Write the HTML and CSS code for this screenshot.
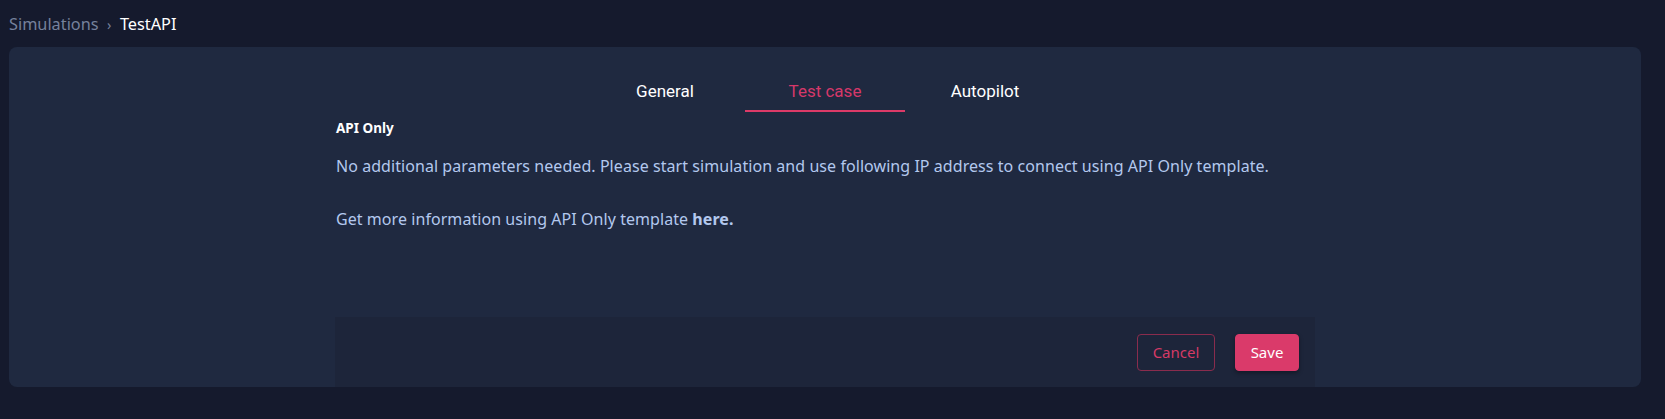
FILE: index.html
```html
<!DOCTYPE html>
<html>
<head>
<meta charset="utf-8">
<link rel="stylesheet" href="styles.css">
</head>
<body>
<nav class="crumbs">
  <span class="crumb-link">Simulations</span>
  <span class="crumb-sep">›</span>
  <span class="crumb-current">TestAPI</span>
</nav>
<main class="panel">
  <div class="tabs">
    <div class="tab">General</div>
    <div class="tab active">Test case</div>
    <div class="tab">Autopilot</div>
  </div>
  <section class="content">
    <h3 class="title">API Only</h3>
    <p class="text">No additional parameters needed. Please start simulation and use following IP address to connect using API Only template.</p>
    <p class="text more">Get more information using API Only template <strong>here.</strong></p>
    <div class="spacer"></div>
    <div class="footer">
      <button class="btn btn-outline">Cancel</button>
      <button class="btn btn-primary">Save</button>
    </div>
  </section>
</main>
</body>
</html>
```

FILE: styles.css
```css
html, body {
  margin: 0;
  padding: 0;
  background: #151a2d;
}
body {
  font-family: "Noto Sans", "Open Sans", sans-serif;
  width: 1665px;
  height: 419px;
  overflow: hidden;
}
.crumbs {
  display: flex;
  align-items: baseline;
  gap: 8.5px;
  padding: 12px 0 0 9px;
  height: 47px;
  box-sizing: border-box;
  font-size: 16.3px;
  line-height: 24px;
}
.crumb-link { color: #75819c; }
.crumb-sep { color: #75819c; font-size: 14px; }
.crumb-current { color: #ffffff; }

.panel {
  margin: 0 24px 0 9px;
  height: 340px;
  background: #1f2940;
  border-radius: 8px;
  display: flex;
  flex-direction: column;
  box-sizing: border-box;
  padding-top: 22px;
}
.tabs {
  display: flex;
  justify-content: center;
}
.tab {
  width: 160px;
  height: 43px;
  box-sizing: border-box;
  padding-top: 4px;
  text-align: center;
  font-family: Roboto, "Noto Sans", sans-serif;
  font-size: 17px;
  line-height: 37px;
  color: #ffffff;
  border-bottom: 2px solid transparent;
}
.tab.active {
  color: #d6386a;
  border-bottom-color: #dc3a68;
}
.content {
  margin-left: 326px;
  width: 980px;
  flex: 1;
  display: flex;
  flex-direction: column;
}
.title {
  margin: 6px 0 0 0;
  padding-left: 1px;
  font-size: 13.5px;
  line-height: 20px;
  font-weight: 700;
  color: #ffffff;
}
.text {
  margin: 16px 0 0 0;
  padding-left: 1px;
  font-size: 16px;
  letter-spacing: 0.06px;
  line-height: 24px;
  color: #b3c8ee;
}
.text.more {
  margin-top: 29px;
}
.text strong { font-weight: 700; }
.spacer { flex: 1; }
.footer {
  height: 70px;
  background: #1d253a;
  display: flex;
  justify-content: flex-end;
  align-items: center;
  gap: 20px;
  padding: 0 16px 0 0;
  box-sizing: border-box;
}
.btn {
  height: 37px;
  font-family: "Noto Sans", sans-serif;
  font-size: 15px;
  border-radius: 4px;
  padding: 0;
  box-sizing: border-box;
  cursor: pointer;
}
.btn-outline {
  width: 78px;
  background: transparent;
  border: 1px solid #8a2c4d;
  color: #d53a66;
}
.btn-primary {
  width: 64px;
  background: #da3a6a;
  border: 1px solid #da3a6a;
  color: #ffffff;
  box-shadow: 0 2px 4px rgba(0,0,0,0.35);
}
```
